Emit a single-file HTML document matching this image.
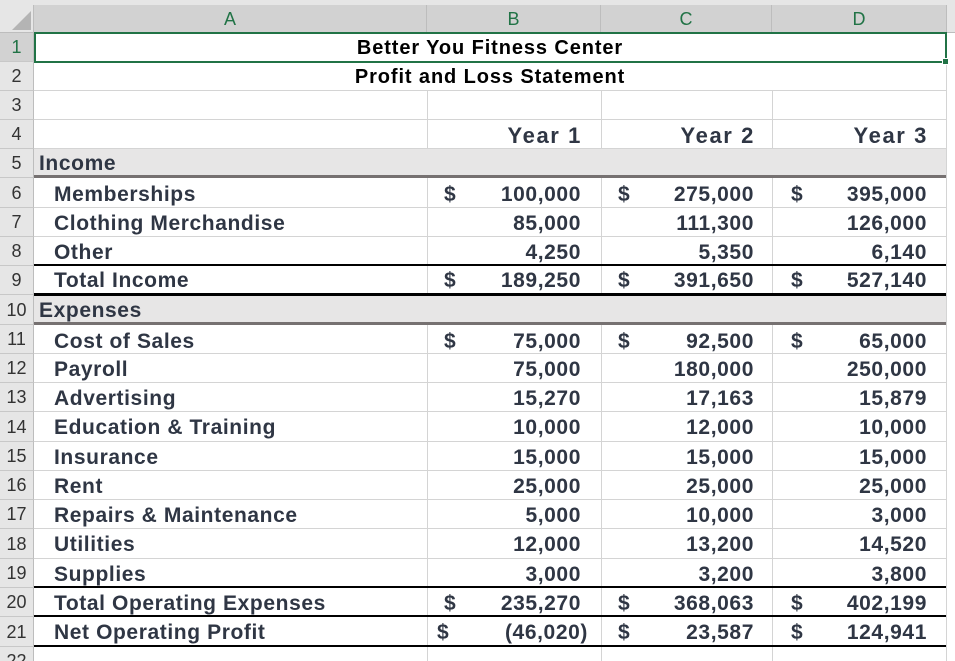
<!DOCTYPE html>
<html><head><meta charset="utf-8"><style>
*{margin:0;padding:0;box-sizing:border-box}
html,body{width:955px;height:661px;overflow:hidden}
body{background:#fff;font-family:"Liberation Sans",Arial,sans-serif;position:relative}
.top{position:absolute;left:0;top:0;width:955px;height:5px;background:#e6e6e6}
.hdr{position:absolute;top:5px;height:28px;background:#d2d2d2;border-right:1px solid #bdbdbd;border-bottom:1px solid #bdbdbd;color:#217346;font-size:18px;text-align:center;line-height:28px}
.rh{position:absolute;left:0;width:34px;background:#e6e6e6;border-bottom:1px solid #c8c8c8;border-right:1px solid #bdbdbd;color:#333;font-size:18px;text-align:center}
.row{position:absolute;left:34px;width:912px;border-bottom:1px solid #d4d4d4;font-weight:bold;font-size:21px;letter-spacing:0.6px;color:#2f3644}
.vl{position:absolute;width:1px;background:#d4d4d4}
.c{position:absolute;top:0;white-space:nowrap}
.a{left:20px}
.d1{left:410px}.n1{right:365px}
.d2{left:584px}.n2{right:192px}
.d3{left:757px}.n3{right:19px}
.band{background:#e7e6e6}
</style></head><body>
<div class="top"></div>
<div style="position:absolute;left:0;top:5px;width:34px;height:28px;background:#e6e6e6;border-right:1px solid #bdbdbd;border-bottom:1px solid #bdbdbd"></div>
<svg style="position:absolute;left:10px;top:9px" width="22" height="22"><polygon points="21,2 21,21 2,21" fill="#b4b4b4"/></svg>
<div class="hdr" style="left:34px;width:393px">A</div>
<div class="hdr" style="left:427px;width:174px">B</div>
<div class="hdr" style="left:601px;width:171px">C</div>
<div class="hdr" style="left:772px;width:175px">D</div>
<div style="position:absolute;left:947px;top:5px;width:8px;height:28px;background:#e6e6e6;border-bottom:1px solid #bdbdbd"></div>

<div class="vl" style="left:427px;top:91px;height:570px"></div>
<div class="vl" style="left:601px;top:91px;height:570px"></div>
<div class="vl" style="left:772px;top:91px;height:570px"></div>
<div class="vl" style="left:946px;top:33px;height:628px"></div>

<div class="rh" style="top:33px;height:29px;line-height:29px;background:#d2d2d2;color:#217346">1</div>
<div class="rh" style="top:62px;height:29px;line-height:29px">2</div>
<div class="rh" style="top:91px;height:29px;line-height:29px">3</div>
<div class="rh" style="top:120px;height:29px;line-height:29px">4</div>
<div class="rh" style="top:149px;height:29px;line-height:29px">5</div>
<div class="rh" style="top:178px;height:30px;line-height:30px">6</div>
<div class="rh" style="top:208px;height:29px;line-height:29px">7</div>
<div class="rh" style="top:237px;height:29px;line-height:29px">8</div>
<div class="rh" style="top:266px;height:29px;line-height:29px">9</div>
<div class="rh" style="top:295px;height:30px;line-height:30px">10</div>
<div class="rh" style="top:325px;height:29px;line-height:29px">11</div>
<div class="rh" style="top:354px;height:29px;line-height:29px">12</div>
<div class="rh" style="top:383px;height:29px;line-height:29px">13</div>
<div class="rh" style="top:412px;height:30px;line-height:30px">14</div>
<div class="rh" style="top:442px;height:29px;line-height:29px">15</div>
<div class="rh" style="top:471px;height:29px;line-height:29px">16</div>
<div class="rh" style="top:500px;height:29px;line-height:29px">17</div>
<div class="rh" style="top:529px;height:30px;line-height:30px">18</div>
<div class="rh" style="top:559px;height:29px;line-height:29px">19</div>
<div class="rh" style="top:588px;height:29px;line-height:29px">20</div>
<div class="rh" style="top:617px;height:30px;line-height:30px">21</div>
<div class="rh" style="top:647px;height:29px;line-height:29px">22</div>

<div class="row" style="top:33px;height:29px;line-height:31px;color:#000;border-bottom:none;font-size:20px;letter-spacing:0.9px"><span class="c" style="left:0;width:912px;text-align:center">Better You Fitness Center</span></div>
<div class="row" style="top:62px;height:29px;line-height:31px;color:#000;font-size:20px;letter-spacing:0.9px"><span class="c" style="left:0;width:912px;text-align:center">Profit and Loss Statement</span></div>
<div class="row" style="top:91px;height:29px"></div>
<div class="row" style="top:120px;height:29px;line-height:31px;font-size:22px;letter-spacing:1.6px"><span class="c n1" style="right:364px">Year 1</span><span class="c n2" style="right:191px">Year 2</span><span class="c n3" style="right:18px">Year 3</span></div>
<div class="row band" style="top:149px;height:29px;line-height:30px;border-bottom:3px solid #767171"><span class="c" style="left:5px">Income</span></div>
<div class="row" style="top:178px;height:30px;line-height:33px"><span class="c a">Memberships</span><span class="c d1">$</span><span class="c n1">100,000</span><span class="c d2">$</span><span class="c n2">275,000</span><span class="c d3">$</span><span class="c n3">395,000</span></div>
<div class="row" style="top:208px;height:29px;line-height:32px"><span class="c a">Clothing Merchandise</span><span class="c n1">85,000</span><span class="c n2">111,300</span><span class="c n3">126,000</span></div>
<div class="row" style="top:237px;height:29px;line-height:32px;border-bottom:2px solid #000"><span class="c a">Other</span><span class="c n1">4,250</span><span class="c n2">5,350</span><span class="c n3">6,140</span></div>
<div class="row" style="top:266px;height:30px;line-height:30px;border-bottom:3px solid #000"><span class="c a">Total Income</span><span class="c d1">$</span><span class="c n1">189,250</span><span class="c d2">$</span><span class="c n2">391,650</span><span class="c d3">$</span><span class="c n3">527,140</span></div>
<div class="row band" style="top:296px;height:29px;line-height:30px;border-bottom:3px solid #767171"><span class="c" style="left:5px">Expenses</span></div>
<div class="row" style="top:325px;height:29px;line-height:33px"><span class="c a">Cost of Sales</span><span class="c d1">$</span><span class="c n1">75,000</span><span class="c d2">$</span><span class="c n2">92,500</span><span class="c d3">$</span><span class="c n3">65,000</span></div>
<div class="row" style="top:354px;height:29px;line-height:32px"><span class="c a">Payroll</span><span class="c n1">75,000</span><span class="c n2">180,000</span><span class="c n3">250,000</span></div>
<div class="row" style="top:383px;height:29px;line-height:32px"><span class="c a">Advertising</span><span class="c n1">15,270</span><span class="c n2">17,163</span><span class="c n3">15,879</span></div>
<div class="row" style="top:412px;height:30px;line-height:32px"><span class="c a">Education &amp; Training</span><span class="c n1">10,000</span><span class="c n2">12,000</span><span class="c n3">10,000</span></div>
<div class="row" style="top:442px;height:29px;line-height:32px"><span class="c a">Insurance</span><span class="c n1">15,000</span><span class="c n2">15,000</span><span class="c n3">15,000</span></div>
<div class="row" style="top:471px;height:29px;line-height:32px"><span class="c a">Rent</span><span class="c n1">25,000</span><span class="c n2">25,000</span><span class="c n3">25,000</span></div>
<div class="row" style="top:500px;height:29px;line-height:32px"><span class="c a">Repairs &amp; Maintenance</span><span class="c n1">5,000</span><span class="c n2">10,000</span><span class="c n3">3,000</span></div>
<div class="row" style="top:529px;height:30px;line-height:32px"><span class="c a">Utilities</span><span class="c n1">12,000</span><span class="c n2">13,200</span><span class="c n3">14,520</span></div>
<div class="row" style="top:559px;height:29px;line-height:31px;border-bottom:2px solid #000"><span class="c a">Supplies</span><span class="c n1">3,000</span><span class="c n2">3,200</span><span class="c n3">3,800</span></div>
<div class="row" style="top:588px;height:29px;line-height:31px;border-bottom:2px solid #000"><span class="c a">Total Operating Expenses</span><span class="c d1">$</span><span class="c n1">235,270</span><span class="c d2">$</span><span class="c n2">368,063</span><span class="c d3">$</span><span class="c n3">402,199</span></div>
<div class="row" style="top:617px;height:30px;line-height:31px;border-bottom:2px solid #000"><span class="c a">Net Operating Profit</span><span class="c" style="left:403px">$</span><span class="c" style="right:358px">(46,020)</span><span class="c d2">$</span><span class="c n2">23,587</span><span class="c d3">$</span><span class="c n3">124,941</span></div>

<div style="position:absolute;left:34px;top:32px;width:913px;height:31px;border:2px solid #217346"></div>
<div style="position:absolute;left:942px;top:58px;width:7px;height:7px;background:#217346;border:1px solid #fff"></div>
</body></html>
